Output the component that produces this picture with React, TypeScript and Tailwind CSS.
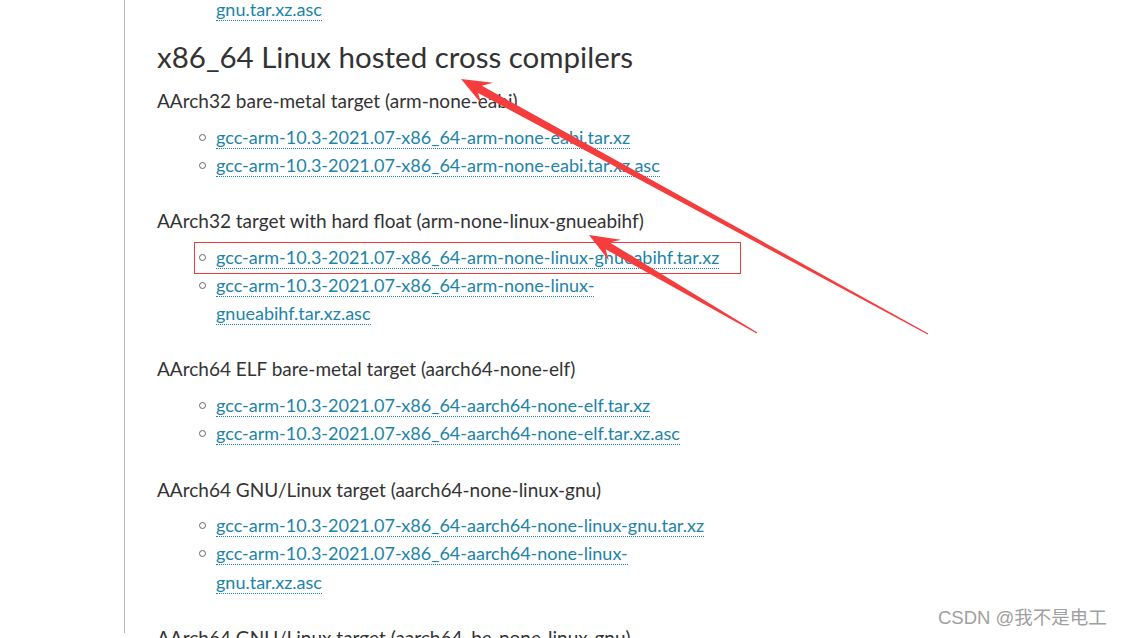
import React from 'react';

type Item = { lines: string[] };
type Group = { title: string; items: Item[] };

const GROUPS: Group[] = [
  {
    title: 'AArch32 bare-metal target (arm-none-eabi)',
    items: [
      { lines: ['gcc-arm-10.3-2021.07-x86_64-arm-none-eabi.tar.xz'] },
      { lines: ['gcc-arm-10.3-2021.07-x86_64-arm-none-eabi.tar.xz.asc'] },
    ],
  },
  {
    title: 'AArch32 target with hard float (arm-none-linux-gnueabihf)',
    items: [
      { lines: ['gcc-arm-10.3-2021.07-x86_64-arm-none-linux-gnueabihf.tar.xz'] },
      { lines: ['gcc-arm-10.3-2021.07-x86_64-arm-none-linux-', 'gnueabihf.tar.xz.asc'] },
    ],
  },
  {
    title: 'AArch64 ELF bare-metal target (aarch64-none-elf)',
    items: [
      { lines: ['gcc-arm-10.3-2021.07-x86_64-aarch64-none-elf.tar.xz'] },
      { lines: ['gcc-arm-10.3-2021.07-x86_64-aarch64-none-elf.tar.xz.asc'] },
    ],
  },
  {
    title: 'AArch64 GNU/Linux target (aarch64-none-linux-gnu)',
    items: [
      { lines: ['gcc-arm-10.3-2021.07-x86_64-aarch64-none-linux-gnu.tar.xz'] },
      { lines: ['gcc-arm-10.3-2021.07-x86_64-aarch64-none-linux-', 'gnu.tar.xz.asc'] },
    ],
  },
  {
    title: 'AArch64 GNU/Linux target (aarch64_be-none-linux-gnu)',
    items: [],
  },
];

const LINK = 'text-[#1c84a8] border-b border-dotted border-[#1c84a8]';

// tapered annotation arrow: thin tail, barbed head
function arrowPoints(tail: [number, number], tip: [number, number]) {
  const dx = tip[0] - tail[0];
  const dy = tip[1] - tail[1];
  const len = Math.hypot(dx, dy);
  const ux = dx / len;
  const uy = dy / len;
  const nx = -uy;
  const ny = ux;
  const L = 30;
  const W = 12;
  const w = 4;
  const p = (a: number, b: number) => `${(tip[0] + a * ux + b * nx).toFixed(1)},${(tip[1] + a * uy + b * ny).toFixed(1)}`;
  const t = (b: number) => `${(tail[0] + b * nx).toFixed(1)},${(tail[1] + b * ny).toFixed(1)}`;
  return [p(0, 0), p(-L, W), p(-L * 0.72, w), t(0.6), t(-0.6), p(-L * 0.72, -w), p(-L, -W)].join(' ');
}

function Bullet() {
  return <span className="absolute left-[-17px] top-[11px] w-[7px] h-[7px] rounded-full border border-[#666]" />;
}

export default function App() {
  return (
    <div
      className="relative w-[1123px] h-[638px] overflow-hidden bg-white"
      style={{ fontFamily: 'Lato, "Noto Sans", sans-serif' }}
    >
      <div className="ml-[124px] h-full border-l border-[#bdbdbd] pl-[32px] text-[#333]">
        {/* tail of previous list */}
        <div className="-mt-[5px] pl-[59px] text-[18px] leading-[28px]">
          <span className={LINK}>gnu.tar.xz.asc</span>
        </div>

        <h2 className="mt-[14px] text-[29.5px] leading-[40px] text-[#333]">x86_64 Linux hosted cross compilers</h2>

        <div className="mt-[10px]">
          {GROUPS.map((g) => (
            <div key={g.title} className="mb-[28px]">
              <p className="text-[19px] leading-[28px]">{g.title}</p>
              {g.items.length > 0 && (
                <ul className="mt-[7.5px] pl-[59px] text-[18px] leading-[28.3px]">
                  {g.items.map((it) => (
                    <li key={it.lines.join('')} className="relative">
                      <Bullet />
                      {it.lines.map((ln, i) => (
                        <React.Fragment key={i}>
                          <span className={LINK}>{ln}</span>
                          {i < it.lines.length - 1 && <br />}
                        </React.Fragment>
                      ))}
                    </li>
                  ))}
                </ul>
              )}
            </div>
          ))}
        </div>
      </div>

      {/* red highlight box */}
      <div className="absolute left-[194px] top-[242px] w-[547px] h-[32px] border border-[#f23c3c]" />

      {/* annotation arrows */}
      <svg className="absolute left-0 top-0" width="1123" height="638" viewBox="0 0 1123 638">
        <polygon points={arrowPoints([928, 334], [461, 79])} fill="#f53d3d" />
        <polygon points={arrowPoints([757, 333], [589, 235])} fill="#f53d3d" />
      </svg>

      {/* watermark */}
      <div
        className="absolute left-[938px] top-[605px] text-[18.5px] leading-[26px] text-[#a0a0a0]"
        style={{ fontFamily: '"Liberation Sans", "Noto Sans CJK SC", sans-serif' }}
      >
        CSDN @我不是电工
      </div>
    </div>
  );
}
